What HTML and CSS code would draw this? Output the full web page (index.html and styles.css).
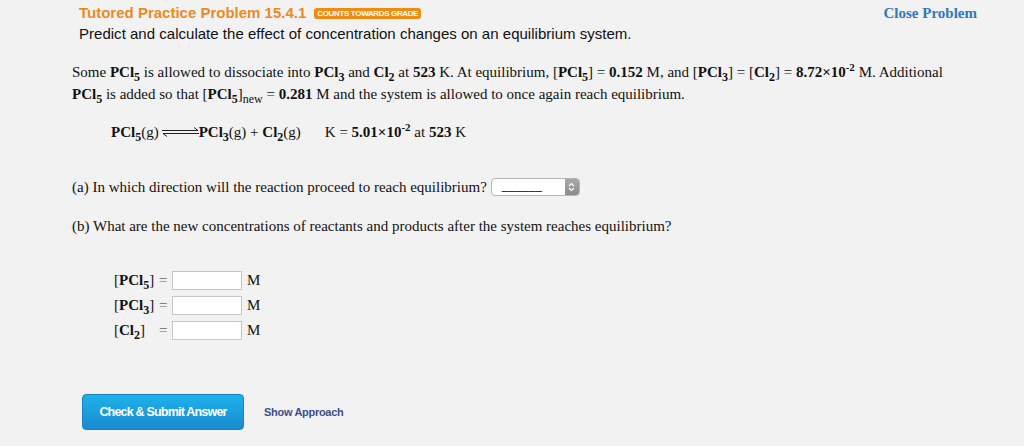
FILE: index.html
```html
<!DOCTYPE html>
<html>
<head>
<meta charset="utf-8">
<link rel="stylesheet" href="styles.css">
</head>
<body>
<div class="page">
  <header class="head">
    <div class="head-left">
      <div class="title-row">
        <span class="title">Tutored Practice Problem 15.4.1</span>
        <span class="badge">COUNTS TOWARDS GRADE</span>
      </div>
      <div class="subtitle">Predict and calculate the effect of concentration changes on an equilibrium system.</div>
    </div>
    <a class="close">Close Problem</a>
  </header>

  <div class="content">
    <p class="intro">Some <b>PCl<sub>5</sub></b> is allowed to dissociate into <b>PCl<sub>3</sub></b> and <b>Cl<sub>2</sub></b> at <b>523</b> K. At equilibrium, [<b>PCl<sub>5</sub></b>] = <b>0.152</b> M, and [<b>PCl<sub>3</sub></b>] = [<b>Cl<sub>2</sub></b>] = <b>8.72×10<sup>-2</sup></b> M. Additional <b>PCl<sub>5</sub></b> is added so that [<b>PCl<sub>5</sub></b>]<sub>new</sub> = <b>0.281</b> M and the system is allowed to once again reach equilibrium.</p>

    <div class="equation">
      <span><b>PCl<sub>5</sub></b>(g)</span>
      <svg class="eqarrow" width="37" height="10" viewBox="0 0 37 10">
        <line x1="0" y1="3.5" x2="36" y2="3.5" stroke="#222" stroke-width="1"/>
        <line x1="32" y1="0.5" x2="36" y2="3.5" stroke="#222" stroke-width="1"/>
        <line x1="1" y1="6.5" x2="37" y2="6.5" stroke="#222" stroke-width="1"/>
        <line x1="1" y1="6.5" x2="5" y2="9.5" stroke="#222" stroke-width="1"/>
      </svg>
      <span><b>PCl<sub>3</sub></b>(g) + <b>Cl<sub>2</sub></b>(g)</span>
      <span class="kval">K = <b>5.01×10<sup>-2</sup></b> at <b>523</b> K</span>
    </div>

    <div class="qa">
      <span>(a) In which direction will the reaction proceed to reach equilibrium?</span>
      <span class="select"><span class="select-val">______</span><span class="select-btn"><svg width="7" height="10" viewBox="0 0 7 10"><path d="M1 4 L3.5 1.5 L6 4 M1 6 L3.5 8.5 L6 6" fill="none" stroke="#fff" stroke-width="1.2"/></svg></span></span>
    </div>

    <p class="qb">(b) What are the new concentrations of reactants and products after the system reaches equilibrium?</p>

    <div class="conc">
      <div class="conc-row"><span class="lbl">[<b>PCl<sub>5</sub></b>]</span><span class="eq">=</span><span class="field"></span><span class="unit">M</span></div>
      <div class="conc-row"><span class="lbl">[<b>PCl<sub>3</sub></b>]</span><span class="eq">=</span><span class="field"></span><span class="unit">M</span></div>
      <div class="conc-row"><span class="lbl">[<b>Cl<sub>2</sub></b>]</span><span class="eq">=</span><span class="field"></span><span class="unit">M</span></div>
    </div>

    <div class="actions">
      <button class="submit">Check &amp; Submit Answer</button>
      <a class="approach">Show Approach</a>
    </div>
  </div>
</div>
</body>
</html>
```

FILE: styles.css
```css
html, body {
  margin: 0;
  padding: 0;
  background: #f2f2f2;
}
body {
  font-family: "Liberation Serif", "Times New Roman", serif;
  color: #111;
}
.page {
  width: 1024px;
  height: 446px;
  overflow: hidden;
}
.head {
  display: flex;
  justify-content: space-between;
  align-items: flex-start;
  padding: 3px 47px 0 79px;
}
.title-row {
  display: flex;
  align-items: center;
  gap: 8px;
  height: 19px;
}
.title {
  font-family: "Liberation Sans", Arial, sans-serif;
  font-weight: bold;
  font-size: 15px;
  color: #ea8a1f;
}
.badge {
  font-family: "Liberation Sans", Arial, sans-serif;
  font-weight: bold;
  font-size: 8px;
  color: #fff;
  background: #ef8a12;
  border-radius: 3px;
  padding: 1px 3px;
  letter-spacing: -0.35px;
  line-height: 9px;
  margin-top: 2px;
}
.subtitle {
  font-family: "Liberation Sans", Arial, sans-serif;
  font-size: 15px;
  color: #111;
  margin-top: 3px;
  letter-spacing: 0.02px;
}
.close {
  font-weight: bold;
  font-size: 15px;
  color: #2f78c0;
  margin-top: 2px;
}
.content {
  padding-left: 72px;
  font-size: 15px;
}
.intro {
  margin: 19px 0 0;
  width: 900px;
  line-height: 22px;
  color: #111;
}
sub {
  font-size: 12px;
  vertical-align: -4px;
  line-height: 0;
}
sup {
  font-size: 11px;
  vertical-align: 6px;
  line-height: 0;
}
.equation {
  display: flex;
  align-items: center;
  margin: 16px 0 0 39px;
  height: 22px;
}
.eqarrow {
  margin: 0 0 0 3px;
}
.kval {
  margin-left: 24px;
}
.qa {
  display: flex;
  align-items: center;
  gap: 4px;
  margin-top: 35px;
  height: 18px;
}
.select {
  display: inline-flex;
  width: 87px;
  height: 16px;
  border: 1px solid #b5b5b5;
  border-radius: 4px;
  background: #fff;
  overflow: hidden;
}
.select-val {
  flex: 1;
  font-family: "Liberation Sans", Arial, sans-serif;
  font-size: 12px;
  line-height: 13px;
  padding-left: 10px;
  color: #222;
}
.select-btn {
  width: 14px;
  background: linear-gradient(#a9a9a9, #8c8c8c);
  display: flex;
  align-items: center;
  justify-content: center;
}
.qb {
  margin: 21px 0 0;
  line-height: 18px;
}
.conc {
  margin: 36px 0 0 42px;
  display: flex;
  flex-direction: column;
  gap: 6px;
}
.conc-row {
  display: flex;
  align-items: center;
  height: 19px;
}
.lbl {
  width: 45px;
}
.eq {
  color: #666;
  width: 13px;
}
.field {
  width: 68px;
  height: 17px;
  background: #fff;
  border: 1px solid #c6c6c6;
}
.unit {
  margin-left: 5px;
}
.actions {
  display: flex;
  align-items: center;
  margin: 54px 0 0 10px;
}
.submit {
  width: 162px;
  height: 36px;
  border: 1px solid #1a82c4;
  border-radius: 4px;
  background: linear-gradient(#1db2ec, #1a8ad0);
  color: #fff;
  font-family: "Liberation Sans", Arial, sans-serif;
  font-weight: bold;
  font-size: 12.5px;
  letter-spacing: -0.8px;
  padding: 0;
}
.approach {
  margin-left: 20px;
  font-family: "Liberation Sans", Arial, sans-serif;
  font-weight: bold;
  font-size: 11px;
  color: #3d4f8c;
  letter-spacing: -0.3px;
}
```
